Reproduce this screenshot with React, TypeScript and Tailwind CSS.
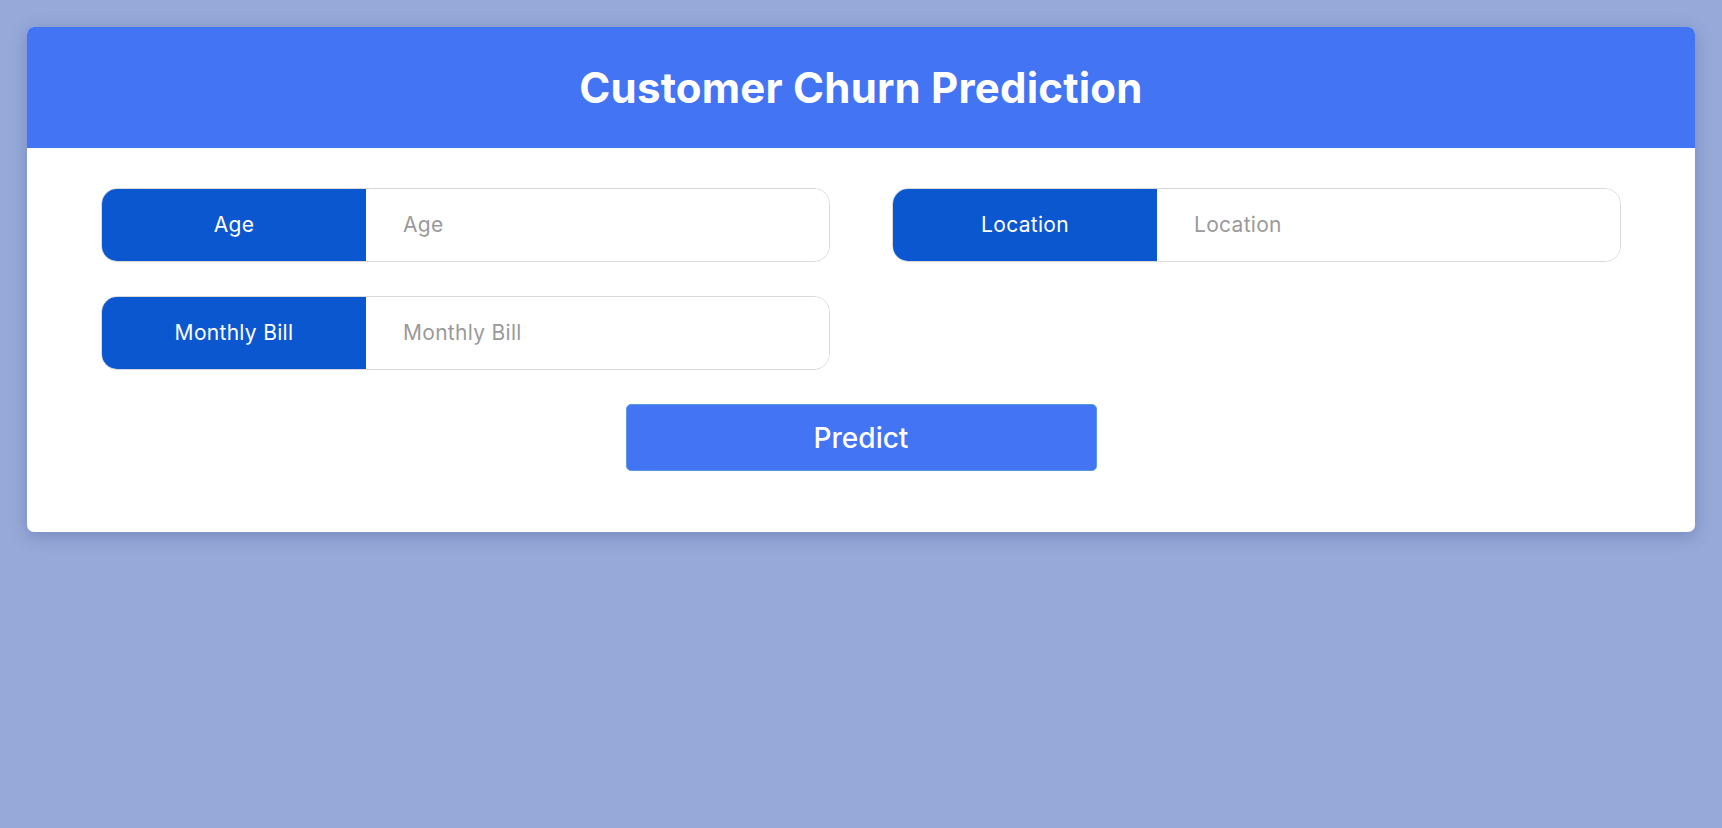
import React from "react";

function Field({ label }: { label: string }) {
  return (
    <div className="flex h-[74px] overflow-hidden rounded-[16px] border border-[#d9d9d9] bg-white">
      <div className="flex w-[264px] shrink-0 items-center justify-center bg-[#0b57d0] text-[21px] tracking-[0.3px] text-white">
        {label}
      </div>
      <input
        className="min-w-0 flex-1 bg-white pl-[37px] text-[21px] tracking-[0.3px] text-[#333] placeholder:text-[#9a9a9a] outline-none"
        placeholder={label}
      />
    </div>
  );
}

export default function App() {
  return (
    <div
      className="min-h-[828px] w-full bg-[#96a9d8] p-[27px]"
      style={{ fontFamily: "Inter, 'Noto Sans', sans-serif" }}
    >
      <div className="overflow-hidden rounded-[7px] bg-white shadow-[0_4px_16px_rgba(60,80,140,0.35)]">
        <div className="flex h-[121px] items-center justify-center bg-[#4274f4]">
          <h1 className="text-[42px] font-bold tracking-[0.2px] text-white">Customer Churn Prediction</h1>
        </div>
        <div className="px-[74px] pt-[40px] pb-[61px]">
          <div className="grid grid-cols-2 gap-x-[62px] gap-y-[34px]">
            <Field label="Age" />
            <Field label="Location" />
            <Field label="Monthly Bill" />
          </div>
          <div className="mt-[34px] flex justify-center">
            <button className="h-[67px] w-[471px] rounded-[5px] border border-[#5a9be0] bg-[#4274f4] text-[28px] font-medium text-white">
              Predict
            </button>
          </div>
        </div>
      </div>
    </div>
  );
}
